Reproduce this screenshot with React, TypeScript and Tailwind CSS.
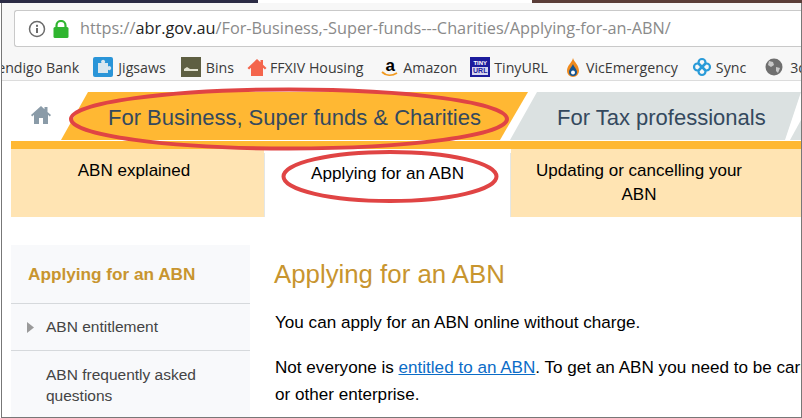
import React from "react";

const Bookmark = ({ icon, label, className }: { icon: React.ReactNode; label: string; className: string }) => (
  <div className={`flex items-center shrink-0 ${className}`}>
    {icon}
    <span className="text-[14.2px] text-[#3a3a3a] whitespace-nowrap">{label}</span>
  </div>
);

export default function App() {
  return (
    <div className="relative w-[802px] h-[418px] overflow-hidden bg-white font-['Liberation_Sans',sans-serif]">
      <div className="flex h-[3px]">
        <div className="w-[258px] bg-[#2b2b45]" />
        <div className="w-[274px] bg-white" />
        <div className="flex-1 bg-[#5a3d38]" />
      </div>
      <div className="h-[415px] ml-[1px] border-l border-r border-b border-[#777] flex flex-col">
        <div className="h-[78px] bg-[#f7f7f7] border-b border-[#dcdcdc] shrink-0 font-['Open_Sans',sans-serif]">
          <div className="ml-[12px] mt-[7px] h-[37px] bg-white border border-r-0 border-[#c9c9c9] rounded-l-[3px] flex items-center">
            <svg width="18" height="18" viewBox="0 0 18 18" className="ml-[13px] shrink-0">
              <circle cx="9" cy="9" r="7.5" fill="none" stroke="#6b6b6b" strokeWidth="1.5" />
              <rect x="8" y="8" width="2" height="5" fill="#6b6b6b" />
              <rect x="8" y="4.8" width="2" height="2" fill="#6b6b6b" />
            </svg>
            <svg width="16" height="18" viewBox="0 0 16 18" className="ml-[7px] shrink-0">
              <rect x="0.5" y="7" width="15" height="11" rx="1.5" fill="#2fb52f" />
              <path d="M3.5 8V5.5a4.5 4.5 0 0 1 9 0V8" fill="none" stroke="#2fb52f" strokeWidth="2.2" />
            </svg>
            <div className="ml-[11px] text-[16.3px] text-[#8a8a8a] whitespace-nowrap">
              https://<span className="text-[#222]">abr.gov.au</span>/For-Business,-Super-funds---Charities/Applying-for-an-ABN/
            </div>
          </div>
          <div className="h-[33px] mt-[4px] flex items-center overflow-hidden">
            <Bookmark className="ml-[-14px]" icon={null} label="Bendigo Bank" />
            <Bookmark
              className="ml-[14px]"
              label="Jigsaws"
              icon={
                <svg width="20" height="20" viewBox="0 0 20 20" className="mr-[5px]">
                  <rect width="20" height="20" rx="2" fill="#2a95d8" />
                  <path d="M5 6h3.5a2 2 0 1 1 3.2 0H15v3.5a2 2 0 1 1 0 3.2V16H5z" fill="#d9e7ef" />
                </svg>
              }
            />
            <Bookmark
              className="ml-[15px]"
              label="Bins"
              icon={
                <svg width="20" height="20" viewBox="0 0 20 20" className="mr-[5px]">
                  <rect width="20" height="20" fill="#5e5f42" />
                  <path d="M3 12l3-2 3 2h8v2H3z" fill="#e2e2d0" />
                </svg>
              }
            />
            <Bookmark
              className="ml-[13px]"
              label="FFXIV Housing"
              icon={
                <svg width="20" height="20" viewBox="0 0 20 20" className="mr-[3px]">
                  <path d="M10 2L0.5 11l1.6 1.5L4 10.8V19h12v-8.2l1.9 1.7 1.6-1.5L16 7.7V3h-2.5v2.3z" fill="#f4654c" />
                </svg>
              }
            />
            <Bookmark
              className="ml-[17px]"
              label="Amazon"
              icon={
                <span className="relative w-[20px] h-[22px] mr-[3px] flex justify-center">
                  <span className="text-[17px] leading-[17px] font-bold text-black font-['Liberation_Sans',sans-serif]">a</span>
                  <svg width="18" height="7" viewBox="0 0 18 7" className="absolute left-[1px] bottom-[1px]">
                    <path d="M1 1c4 4 10 4 15 1" fill="none" stroke="#f29a1f" strokeWidth="1.8" />
                  </svg>
                </span>
              }
            />
            <Bookmark
              className="ml-[13px]"
              label="TinyURL"
              icon={
                <span className="w-[20px] h-[20px] mr-[4px] bg-[#1c1c9c] flex flex-col items-center justify-center text-white font-bold font-['Liberation_Sans',sans-serif]">
                  <span className="text-[6px] leading-[8px]">TINY</span>
                  <span className="text-[7px] leading-[8px] bg-[#d5d5ee] text-[#1c1c9c] px-[1px]">URL</span>
                </span>
              }
            />
            <Bookmark
              className="ml-[15px]"
              label="VicEmergency"
              icon={
                <svg width="20" height="22" viewBox="0 0 20 22" className="mr-[3px]">
                  <path d="M10 1c1 4 6 7 6 13a6 6 0 0 1-12 0C4 8 9 6 10 1z" fill="#f08a1d" />
                  <path d="M10 7c.8 3 4 5 4 8a4 4 0 0 1-8 0c0-3 3-5 4-8z" fill="#16548f" />
                  <circle cx="10" cy="15.5" r="2" fill="#fff" />
                </svg>
              }
            />
            <Bookmark
              className="ml-[14px]"
              label="Sync"
              icon={
                <svg width="20" height="20" viewBox="0 0 20 20" className="mr-[4px]">
                  <g fill="none" stroke="#2a9bd8" strokeWidth="2.2">
                    <circle cx="10" cy="5.5" r="3.5" />
                    <circle cx="10" cy="14.5" r="3.5" />
                    <circle cx="5.5" cy="10" r="3.5" />
                    <circle cx="14.5" cy="10" r="3.5" />
                  </g>
                </svg>
              }
            />
            <Bookmark
              className="ml-[19px]"
              label="3d"
              icon={
                <svg width="18" height="18" viewBox="0 0 18 18" className="mr-[7px]">
                  <circle cx="9" cy="9" r="8.5" fill="#6f6f6f" />
                  <path d="M4 3l4 1 1 3-3 2-3-2zM11 9l4 1-2 5-2-2z" fill="#c8c8c8" />
                </svg>
              }
            />
          </div>
        </div>

        <div className="flex-1 min-h-0 overflow-hidden">
          <div className="h-[60px] flex ml-[9px] relative">
            <div className="w-[50px] h-[60px] flex justify-center pt-[25px]">
              <svg width="20" height="18" viewBox="0 0 20 18" className="ml-[10px]">
                <path d="M10 0L0 9l1.2 1.4L3 8.8V18h5v-6h4v6h5V8.8l1.8 1.6L20 9l-3.5-3.1V1h-3v2.2z" fill="#8a9ba8" />
              </svg>
            </div>
            <div className="absolute left-[50px] top-[11px] w-[467px] h-[48px] bg-[#ffb833] [clip-path:polygon(27px_0,100%_0,439px_100%,0_100%)] flex items-center pl-[47px] pt-[2px]">
              <span className="text-[22px] text-[#34495e] whitespace-nowrap">For Business, Super funds &amp; Charities</span>
            </div>
            <div className="absolute left-[499px] top-[11px] w-[291px] h-[48px] bg-[#dbe1e1] [clip-path:polygon(27px_0,100%_0,275px_100%,0_100%)] flex items-center pl-[47px] pt-[2px]">
              <span className="text-[22px] text-[#34495e] whitespace-nowrap">For Tax professionals</span>
            </div>
            <div className="absolute left-[779px] top-[39px] w-[11px] h-[20px] bg-[#dbe1e1] [clip-path:polygon(100%_0,100%_100%,0_100%)]" />
          </div>
          <div className="ml-[9px] h-[8px] bg-[#ffb833]" />
          <div className="ml-[9px] flex h-[68px]">
            <div className="w-[253px] bg-[#ffe4b3] pt-[10px] pr-[7px] text-center text-[17px] leading-[24px] text-black">ABN explained</div>
            <div className="w-[247px] mt-[4px] bg-white border-l border-r border-[#e3e6e6] pt-[9px] text-center text-[17.1px] leading-[24px] text-black">Applying for an ABN</div>
            <div className="flex-1 bg-[#ffe4b3] pt-[10px] pl-[14px] pr-[48px] text-center text-[17px] leading-[24px] text-black">Updating or cancelling your ABN</div>
          </div>

          <div className="flex mt-[28px] ml-[9px]">
            <div className="w-[239px] h-[200px] bg-[#f8f9fb] shrink-0">
              <div className="h-[59px] border-b border-[#d6d9dc] pl-[17px] pt-[17px] text-[17.2px] leading-[24px] font-bold text-[#c8952f]">Applying for an ABN</div>
              <div className="h-[47px] border-b border-[#d6d9dc] flex items-center text-[15.5px] text-[#444]">
                <svg width="7" height="11" viewBox="0 0 7 11" className="ml-[16px] mr-[12px]">
                  <path d="M0 0l7 5.5L0 11z" fill="#9a9a9a" />
                </svg>
                ABN entitlement
              </div>
              <div className="pl-[35px] pt-[13px] text-[15.5px] leading-[21px] text-[#444]">ABN frequently asked<br />questions</div>
            </div>
            <div className="ml-[24px] flex-1 min-w-0 text-[17.1px] text-black whitespace-nowrap">
              <div className="text-[25.8px] leading-[30px] mt-[14px] text-[#c8952f]">Applying for an ABN</div>
              <div className="mt-[23px] ml-[1px] leading-[22px]">You can apply for an ABN online without charge.</div>
              <div className="mt-[20px] ml-[1px] leading-[27px]">
                Not everyone is <span className="text-[#0b6cc7] underline">entitled to an ABN</span>. To get an ABN you need to be carrying on a business
                <br />or other enterprise.
              </div>
            </div>
          </div>
        </div>
      </div>

      <svg width="802" height="418" viewBox="0 0 802 418" className="absolute inset-0 pointer-events-none">
        <ellipse cx="289" cy="119" rx="218" ry="29.5" fill="none" stroke="#e04444" strokeWidth="4" />
        <ellipse cx="390" cy="176.5" rx="106.5" ry="24.5" fill="none" stroke="#e04444" strokeWidth="4" />
      </svg>
    </div>
  );
}
